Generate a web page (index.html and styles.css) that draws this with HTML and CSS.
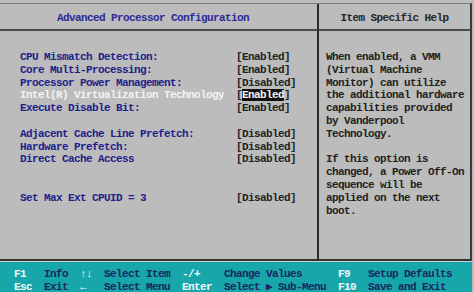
FILE: index.html
```html
<!DOCTYPE html>
<html lang="en">
<head>
    <meta charset="UTF-8">
    <title>Advanced Processor Configuration</title>
    <link rel="stylesheet" href="styles.css">
</head>
<body>
    <div class="frame">
        <div class="title main-title">Advanced Processor Configuration</div>
        <div class="title help-title">Item Specific Help</div>

        <div class="options">
            <div class="group">
                <span class="label">CPU Mismatch Detection:</span><span class="value">[Enabled]</span>
                <span class="label">Core Multi-Processing:</span><span class="value">[Enabled]</span>
                <span class="label">Processor Power Management:</span><span class="value">[Disabled]</span>
                <span class="label active">Intel(R) Virtualization Technology</span><span class="value">[<span class="sel">Enabled</span>]</span>
                <span class="label">Execute Disable Bit:</span><span class="value">[Enabled]</span>
            </div>
            <div class="group">
                <span class="label">Adjacent Cache Line Prefetch:</span><span class="value">[Disabled]</span>
                <span class="label">Hardware Prefetch:</span><span class="value">[Disabled]</span>
                <span class="label">Direct Cache Access</span><span class="value">[Disabled]</span>
            </div>
            <div class="group far">
                <span class="label">Set Max Ext CPUID = 3</span><span class="value">[Disabled]</span>
            </div>
        </div>

        <div class="help">
            <p>When enabled, a VMM (Virtual Machine Monitor) can utilize the additional hardware capabilities provided by Vanderpool Technology.</p>
            <p>If this option is changed, a Power Off-On sequence will be applied on the next boot.</p>
        </div>
    </div>

    <div class="keys">
        <span class="key">F1</span><span class="desc">Info</span>
        <span class="key">↑↓</span><span class="desc">Select Item</span>
        <span class="key">-/+</span><span class="desc">Change Values</span>
        <span class="key">F9</span><span class="desc">Setup Defaults</span>

        <span class="key">Esc</span><span class="desc">Exit</span>
        <span class="key">←</span><span class="desc">Select Menu</span>
        <span class="key">Enter</span><span class="desc">Select ▶ Sub-Menu</span>
        <span class="key">F10</span><span class="desc">Save and Exit</span>
    </div>
</body>
</html>
```

FILE: styles.css
```css
* {
    box-sizing: border-box;
}
body {
    width: 474px;
    height: 292px;
    margin: 0;
    padding-top: 3px;
    overflow: hidden;
    background: #bcbcbc;
    color: #242424;
    font: bold 11px "Liberation Mono", "DejaVu Sans Mono", monospace;
    letter-spacing: -0.6px; /* 6px per character, like the BIOS text grid */
}
.frame {
    display: grid;
    grid-template-columns: 319px 151px;
    grid-template-rows: 27px 228px;
    width: 472px;
    border-top: 1px solid #7c7c7c;
    border-right: 2px solid #3a3a3a;
    border-bottom: 2px solid #333;
}
.title {
    padding-top: 4px;
    line-height: 21px;
    text-align: center;
    white-space: nowrap;
    border-bottom: 2px solid #4a4a4a;
}
.main-title {
    padding-right: 11px; /* title sits a little left of centre */
    color: #2a2a96;
    border-right: 2px solid #2a2a2a;
}
.help-title {
    color: #262626;
}
.options {
    padding: 20px 0 0 20px;
    border-right: 2px solid #2a2a2a;
    line-height: 12.8px;
}
.group {
    display: grid;
    grid-template-columns: 216px auto;
}
.group + .group {
    margin-top: 12.8px;
}
.group.far {
    margin-top: 25.6px;
}
.label {
    color: #20208a;
    white-space: nowrap;
}
.label.active {
    color: #f4f4f4;
}
.value {
    color: #222;
}
.sel {
    background: #111;
    color: #f4f4f4;
}
.help {
    padding: 20px 0 0 7px;
    line-height: 12.8px;
    color: #222;
}
.help p {
    width: 140px;
    margin: 0 0 12.8px;
}
.keys {
    display: grid;
    grid-template-columns: 30px 36px 24px 78px 42px 114px 30px auto;
    width: 472px;
    height: 31px;
    padding: 6px 0 0 14px;
    line-height: 13px;
    background: #17a6a9;
    border-top: 1px solid #d2d2d2;
    white-space: nowrap;
}
.key {
    color: #f2f8f8;
}
.desc {
    color: #1b2466;
}
```
